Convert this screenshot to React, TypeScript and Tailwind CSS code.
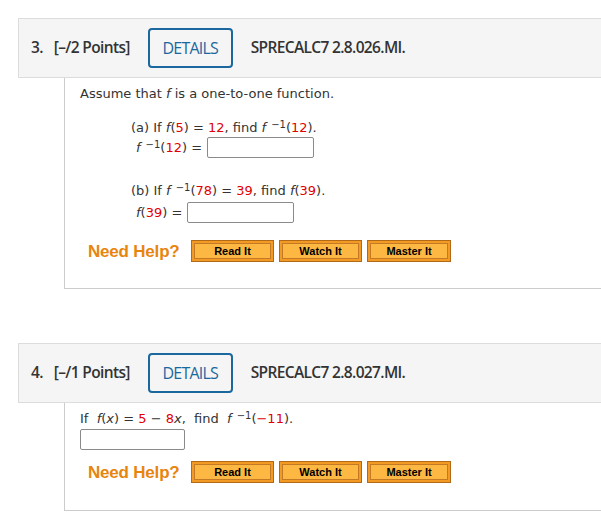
import React from "react";

const R = ({ children }: { children: React.ReactNode }) => (
  <span className="text-[#e00000]">{children}</span>
);
const F = () => <i className="italic">f</i>;
const Inv = () => (
  <span className="inline-block ml-[5px] text-[10px] leading-none align-[4px]">−1</span>
);

const HelpBtn = ({ label, w }: { label: string; w: string }) => (
  <div className={`${w} h-[22px] border border-[#b06a18] bg-[#f29a24] p-[2px] flex`}>
    <div className="flex-1 border border-[#c47a24] bg-[#fdb843] flex items-center justify-center text-[11px] font-bold text-black leading-none [font-family:'Liberation_Sans',Arial,sans-serif]">
      {label}
    </div>
  </div>
);

const NeedHelp = () => (
  <div className="flex items-center pl-[8px]">
    <span className="text-[17px] font-bold text-[#e8850c] leading-none [font-family:'Liberation_Sans',Arial,sans-serif] w-[103px] tracking-[-0.2px]">
      Need Help?
    </span>
    <div className="flex gap-[5px]">
      <HelpBtn label="Read It" w="w-[83px]" />
      <HelpBtn label="Watch It" w="w-[83px]" />
      <HelpBtn label="Master It" w="w-[84px]" />
    </div>
  </div>
);

const Header = ({ n, pts, code }: { n: string; pts: string; code: string }) => (
  <div className="h-[60px] border border-r-0 border-[#dcdcdc] bg-[#f5f5f5] flex items-center pl-[12px] text-[#333] [font-family:'Open_Sans',sans-serif] font-semibold text-[15.5px] tracking-[-0.65px]">
    <span>{n}</span>
    <span className="ml-[11px]">{pts}</span>
    <div className="ml-[18px] w-[85px] h-[40px] rounded-[4px] border-2 border-[#1b689e] flex items-center justify-center text-[#1b689e] font-normal text-[16px] tracking-[-0.8px]">
      DETAILS
    </div>
    <span className="ml-[18px]">{code}</span>
  </div>
);

const Input = ({ w }: { w: string }) => (
  <div className={`${w} h-[21px] border border-[#8a8a8a] rounded-[2px] bg-white`} />
);

export default function App() {
  return (
    <div className="w-[601px] h-[526px] overflow-hidden bg-white pt-[18px] pl-[18px] text-[#333]">
      <Header n="3." pts="[–/2 Points]" code="SPRECALC7 2.8.026.MI." />
      <div className="ml-[46px] border-l border-b border-[#cccccc] pl-[15px] pt-[8px] pb-[26px] [font-family:'DejaVu_Sans',Verdana,sans-serif] text-[13px] leading-[16px]">
        <div>
          Assume that <F /> is a one-to-one function.
        </div>
        <div className="mt-[18px] pl-[51px]">
          (a) If <F />(<R>5</R>) = <R>12</R>, find <F />
          <Inv />(<R>12</R>).
        </div>
        <div className="mt-[1px] pl-[56px] flex items-center gap-[5px]">
          <span>
            <F />
            <Inv />(<R>12</R>) =
          </span>
          <Input w="w-[107px]" />
        </div>
        <div className="mt-[25px] pl-[51px]">
          (b) If <F />
          <Inv />(<R>78</R>) = <R>39</R>, find&nbsp;<F />(<R>39</R>).
        </div>
        <div className="mt-[3px] pl-[56px] flex items-center gap-[5px]">
          <span>
            <F />(<R>39</R>) =
          </span>
          <Input w="w-[107px]" />
        </div>
        <div className="mt-[17px]">
          <NeedHelp />
        </div>
      </div>

      <div className="mt-[54px]">
        <Header n="4." pts="[–/1 Points]" code="SPRECALC7 2.8.027.MI." />
        <div className="ml-[46px] border-l border-b border-[#cccccc] pl-[15px] pt-[8px] pb-[27px] [font-family:'DejaVu_Sans',Verdana,sans-serif] text-[13px] leading-[16px]">
          <div>
            If&nbsp; <F />(<i>x</i>) = <R>5</R> − <R>8</R><i>x</i>,&nbsp; find&nbsp; <F />
            <Inv />(<R>−11</R>).
          </div>
          <div className="mt-[2px]">
            <Input w="w-[105px]" />
          </div>
          <div className="mt-[11px]">
            <NeedHelp />
          </div>
        </div>
      </div>
    </div>
  );
}
